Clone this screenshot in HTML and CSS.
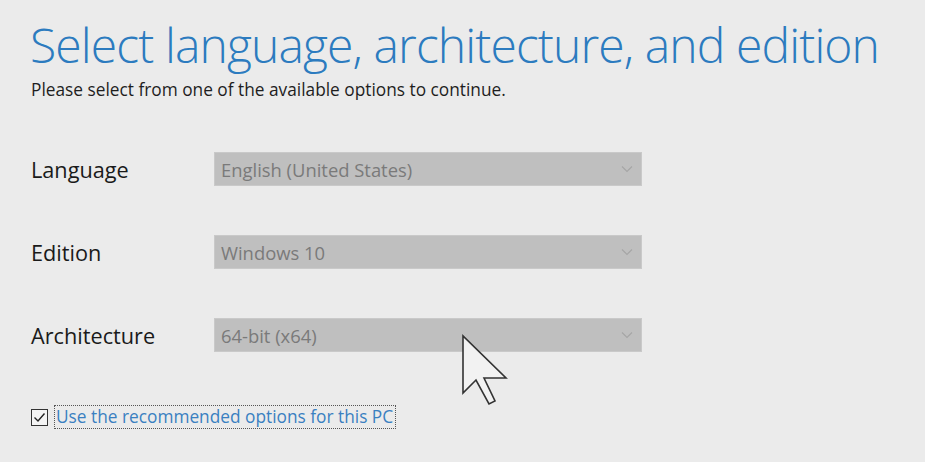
FILE: index.html
```html
<!DOCTYPE html>
<html>
<head>
<meta charset="utf-8">
<link rel="stylesheet" href="styles.css">
</head>
<body>
<div class="page">
  <h1 class="title">Select language, architecture, and edition</h1>
  <p class="subtitle">Please select from one of the available options to continue.</p>
  <div class="rows">
    <div class="row">
      <span class="label">Language</span>
      <div class="select"><span class="value">English (United States)</span>
        <svg class="chev" width="12" height="8" viewBox="0 0 12 8"><path d="M1 1.5 L6 6.5 L11 1.5" fill="none" stroke="#a6a6a6" stroke-width="1.2"/></svg>
      </div>
    </div>
    <div class="row">
      <span class="label">Edition</span>
      <div class="select"><span class="value">Windows 10</span>
        <svg class="chev" width="12" height="8" viewBox="0 0 12 8"><path d="M1 1.5 L6 6.5 L11 1.5" fill="none" stroke="#a6a6a6" stroke-width="1.2"/></svg>
      </div>
    </div>
    <div class="row">
      <span class="label">Architecture</span>
      <div class="select"><span class="value">64-bit (x64)</span>
        <svg class="chev" width="12" height="8" viewBox="0 0 12 8"><path d="M1 1.5 L6 6.5 L11 1.5" fill="none" stroke="#a6a6a6" stroke-width="1.2"/></svg>
      </div>
    </div>
  </div>
  <div class="check-row">
    <span class="box">
      <svg width="13" height="11" viewBox="0 0 13 11"><path d="M1.5 5.5 L5 9 L11.5 1.5" fill="none" stroke="#222" stroke-width="1.4"/></svg>
    </span>
    <span class="check-label">Use the recommended options for this PC</span>
  </div>
</div>
<svg class="cursor" width="50" height="74" viewBox="0 0 50 74">
  <path d="M2 2 L2 59 L15 46 L28 70 L34 67 L23 44 L45 44 Z" fill="#f2f2f2" stroke="#333" stroke-width="1.6" stroke-linejoin="miter"/>
</svg>
</body>
</html>
```
FILE: styles.css
```css
html, body {
  margin: 0;
  padding: 0;
  background: #ebebeb;
  width: 925px;
  height: 462px;
  overflow: hidden;
  position: relative;
}
.page {
  padding: 15px 0 0 31px;
  font-family: "Open Sans", sans-serif;
}
.title {
  margin: 0 0 0 -1px;
  font-weight: 300;
  font-size: 48px;
  line-height: 60px;
  color: #2c7bbf;
  letter-spacing: -0.88px;
  white-space: nowrap;
}
.subtitle {
  margin: 4px 0 0 0;
  font-size: 17.3px;
  line-height: 22px;
  color: #1e1e1e;
}
.rows {
  margin-top: 51px;
  display: flex;
  flex-direction: column;
  gap: 49px;
}
.row {
  display: flex;
  align-items: center;
  height: 34px;
}
.label {
  width: 183px;
  font-size: 21.7px;
  color: #1a1a1a;
}
.select {
  width: 428px;
  height: 34px;
  box-sizing: border-box;
  background: #bfbfbf;
  border: 1px solid #c9c9c9;
  display: flex;
  align-items: center;
  justify-content: space-between;
  padding: 0 8px 0 6px;
}
.value {
  font-size: 18.4px;
  color: #7a7a7a;
}
.check-row {
  margin-top: 53px;
  display: flex;
  align-items: center;
  gap: 6px;
}
.box {
  width: 15px;
  height: 15px;
  border: 1px solid #333;
  background: #f4f4f4;
  display: flex;
  align-items: center;
  justify-content: center;
}
.check-label {
  font-size: 17.3px;
  color: #3a80c1;
  border: 1px dotted #555;
  padding: 1px 2px 1px 1px;
  line-height: 20px;
}
.cursor {
  position: absolute;
  left: 461px;
  top: 334px;
}
```
